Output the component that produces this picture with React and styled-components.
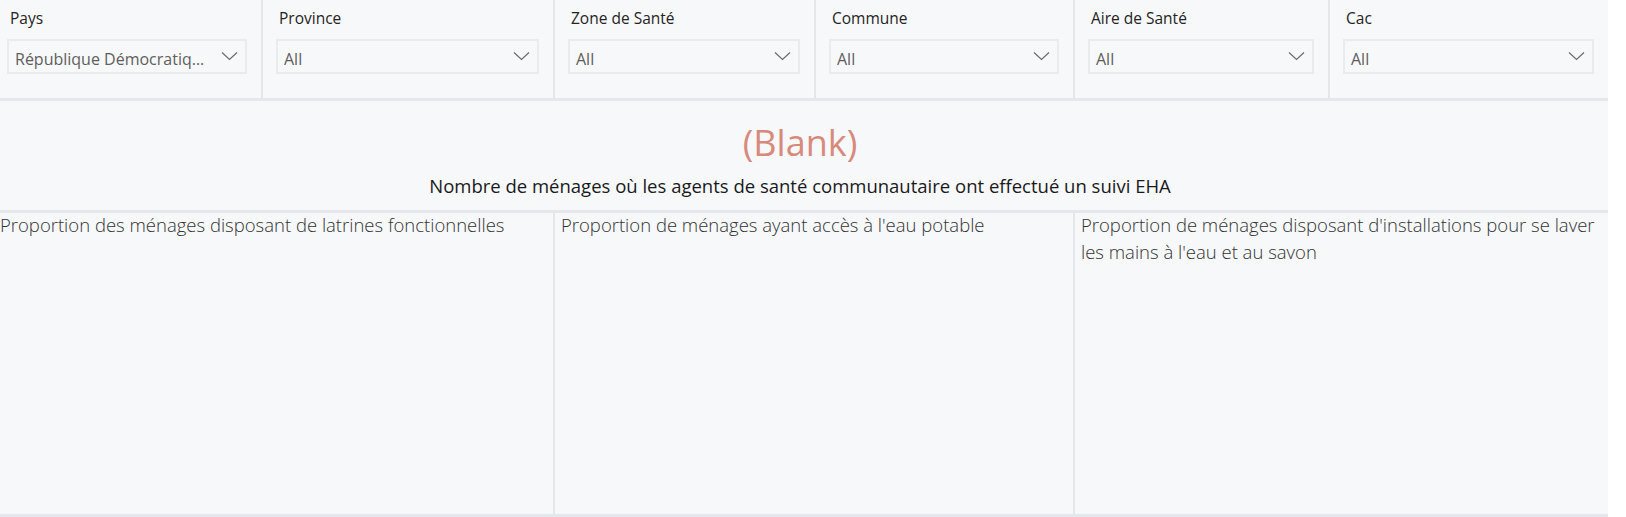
import styled, { createGlobalStyle } from 'styled-components';

// page reset
const GlobalStyle = createGlobalStyle`
  html, body {
    margin: 0;
    padding: 0;
    background: #ffffff;
  }
  body {
    font-family: "Open Sans", "Noto Sans", "Liberation Sans", sans-serif;
    color: #252423;
  }
`;

// report canvas, the gaps draw the grey separators
const Report = styled.div`
  width: 1608px;
  height: 517px;
  display: grid;
  grid-template-rows: 98px 109px 301px;
  row-gap: 3px;
  background: #e4e7eb;
  padding-bottom: 3px;
  box-sizing: border-box;
`;

const FilterBar = styled.div`
  display: grid;
  grid-template-columns: 261px 290px 259px 257px 253px 278px;
  column-gap: 2px;
`;

const Slicer = styled.div`
  background: #f7f8fa;
  padding: 7px 14px 0 ${(p) => p.$left || 13}px;
  display: flex;
  flex-direction: column;
`;

const SlicerLabel = styled.div`
  font-size: 15.5px;
  line-height: 22px;
  height: 22px;
  padding-left: 3px;
  color: #252423;
`;

const Dropdown = styled.div`
  margin-top: 10px;
  height: 35px;
  box-sizing: border-box;
  border: 2px solid #eaebec;
  background: #f7f8fa;
  display: flex;
  align-items: center;
  padding: 4px 7px 0 6px;
  gap: 8px;
`;

const DropdownValue = styled.span`
  flex: 1;
  min-width: 0;
  font-size: 16px;
  color: #605e5c;
  white-space: nowrap;
  overflow: hidden;
  text-overflow: ellipsis;
`;

const Chevron = styled.svg`
  flex: none;
  width: 17px;
  height: 10px;
  margin-top: -5px;
`;

const Banner = styled.div`
  background: #f7f8fa;
  display: flex;
  flex-direction: column;
  align-items: center;
  padding: 20px 8px 0 0;
  box-sizing: border-box;
`;

const BigValue = styled.div`
  font-size: 36px;
  font-weight: 500;
  line-height: 43px;
  color: #d78a7b;
`;

const Caption = styled.div`
  margin-top: 9px;
  font-size: 18.5px;
  line-height: 25px;
  color: #1a1a1a;
`;

const CardRow = styled.div`
  display: grid;
  grid-template-columns: 553px 518px 533px;
  column-gap: 2px;
`;

const Card = styled.div`
  background: #f7f8fa;
  padding: 0 6px 0 ${(p) => (p.$flush ? 0 : 6)}px;
`;

const CardTitle = styled.div`
  margin-top: -2px;
  font-size: 18.5px;
  font-weight: 300;
  line-height: 27px;
  color: #333333;
`;

const filters = [
  { label: 'Pays', value: 'République Démocratique du Congo', left: 7 },
  { label: 'Province', value: 'All' },
  { label: 'Zone de Santé', value: 'All' },
  { label: 'Commune', value: 'All' },
  { label: 'Aire de Santé', value: 'All' },
  { label: 'Cac', value: 'All' },
];

const cards = [
  'Proportion des ménages disposant de latrines fonctionnelles',
  "Proportion de ménages ayant accès à l'eau potable",
  "Proportion de ménages disposant d'installations pour se laver les mains à l'eau et au savon",
];

function App() {
  return (
    <>
      <GlobalStyle />
      <Report>
        <FilterBar>
          {filters.map((f) => (
            <Slicer key={f.label} $left={f.left}>
              <SlicerLabel>{f.label}</SlicerLabel>
              <Dropdown>
                <DropdownValue>{f.value}</DropdownValue>
                <Chevron viewBox="0 0 17 10">
                  <polyline points="1,1.5 8.5,8.5 16,1.5" fill="none" stroke="#6b6b6b" strokeWidth="1.2" />
                </Chevron>
              </Dropdown>
            </Slicer>
          ))}
        </FilterBar>

        <Banner>
          <BigValue>(Blank)</BigValue>
          <Caption>Nombre de ménages où les agents de santé communautaire ont effectué un suivi EHA</Caption>
        </Banner>

        <CardRow>
          {cards.map((c, i) => (
            <Card key={i} $flush={i === 0}>
              <CardTitle>{c}</CardTitle>
            </Card>
          ))}
        </CardRow>
      </Report>
    </>
  );
}

export default App;
